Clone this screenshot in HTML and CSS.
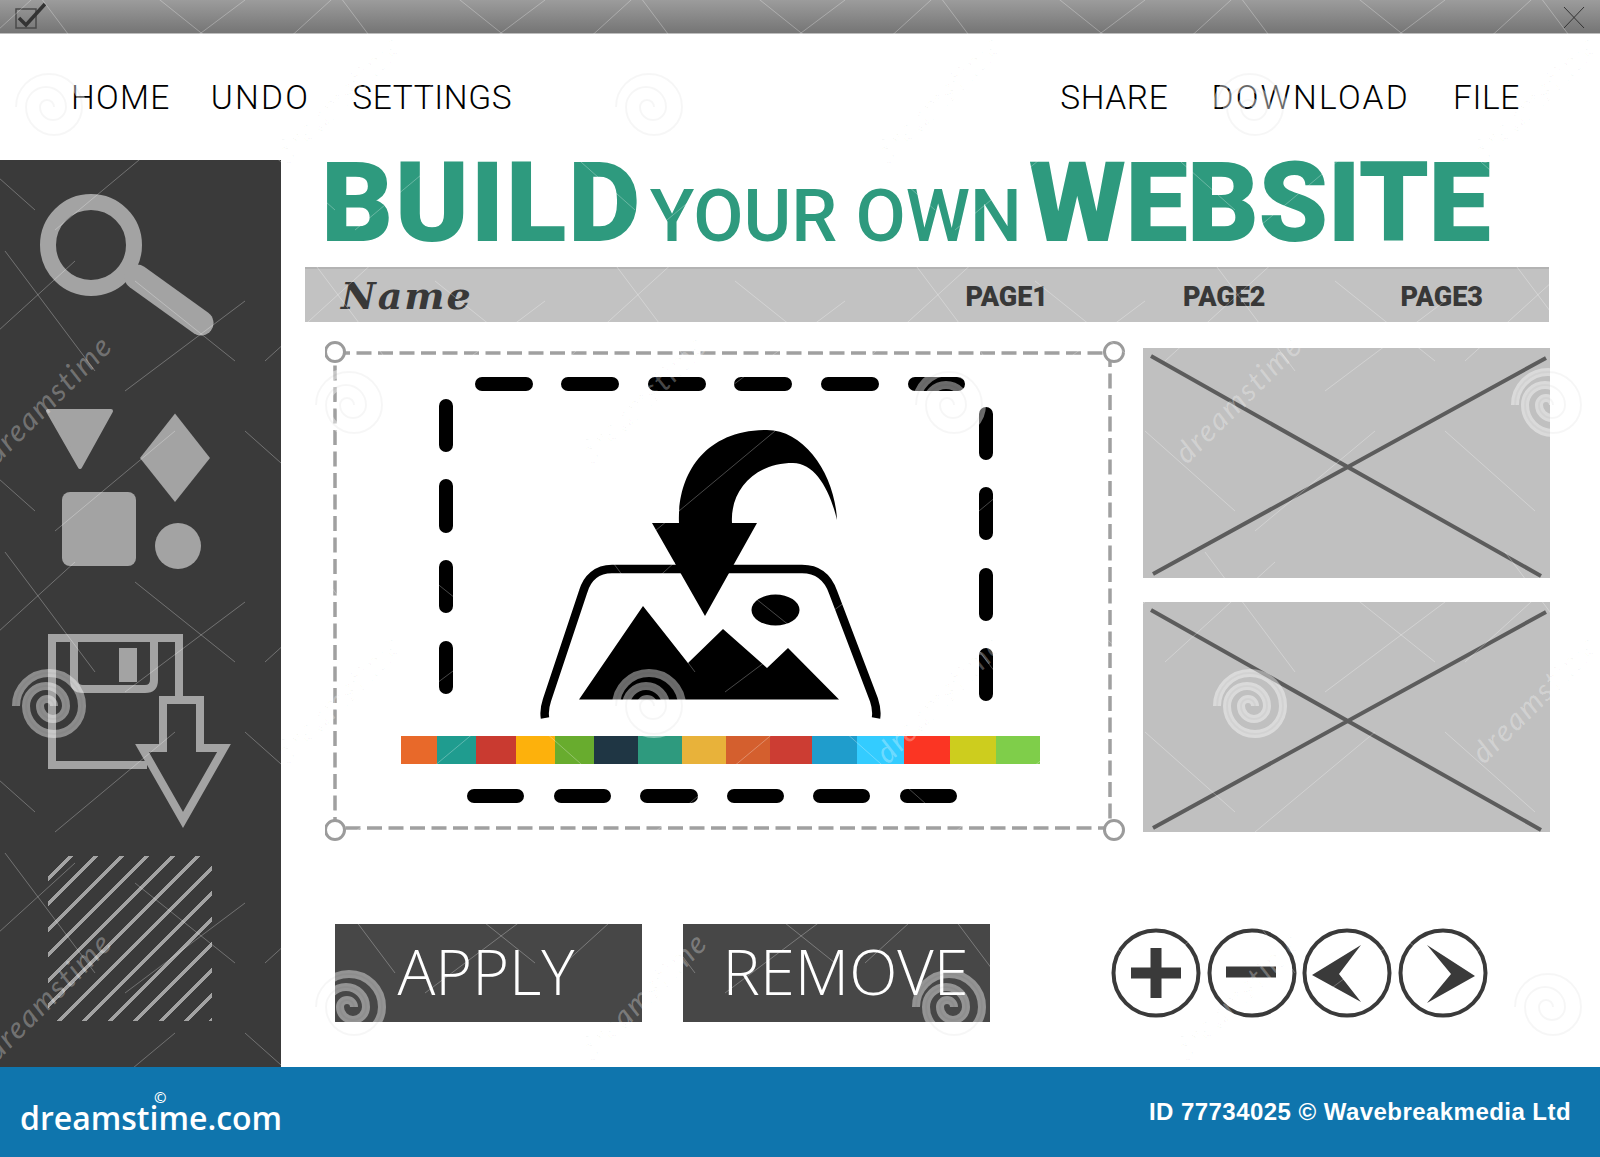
FILE: index.html
```html
<!DOCTYPE html>
<html lang="en">
<head>
    <meta charset="UTF-8">
    <title>Build your own website</title>
    <link rel="stylesheet" href="styles.css">
</head>
<body>
    <div id="page">
        <div class="titlebar">
            <svg width="50" height="33" viewBox="0 0 50 33"><rect x="16" y="9" width="20" height="19" fill="none" stroke="#4a4a4a" stroke-width="1.500"/><path d="M19 18L26 25L45 4" fill="none" stroke="#333" stroke-width="3.500"/></svg>
            <svg width="40" height="33" viewBox="0 0 40 33"><path d="M4 7L24 28M24 7L4 28" stroke="#333" stroke-width="1"/></svg>
        </div>

        <div class="nav">
            <div class="nav-left">
                <span>HOME</span>
                <span class="wide">UNDO</span>
                <span class="tight push">SETTINGS</span>
            </div>
            <div class="nav-right">
                <span class="tight">SHARE</span>
                <span class="wide">DOWNLOAD</span>
                <span class="tight">FILE</span>
            </div>
        </div>

        <div class="middle">
            <div class="sidebar">
                <svg class="ico ico-search" width="200" height="150" viewBox="30 190 200 150">
                    <circle cx="91" cy="245" r="43" fill="none" stroke="#a3a3a3" stroke-width="16"/>
                    <path d="M137 277L201 323" stroke="#a3a3a3" stroke-width="25" stroke-linecap="round"/>
                </svg>
                <svg class="ico ico-shapes" width="200" height="165" viewBox="30 405 200 165">
                    <path d="M48 411H111L80 467Z" fill="#a3a3a3" stroke="#a3a3a3" stroke-width="4" stroke-linejoin="round"/>
                    <path d="M175 413.500L210 458L175 502L140 458Z" fill="#a3a3a3"/>
                    <rect x="62" y="492" width="74" height="74" rx="8" fill="#a3a3a3"/>
                    <circle cx="178" cy="546" r="23" fill="#a3a3a3"/>
                </svg>
                <svg class="ico ico-save" width="210" height="202" viewBox="30 630 210 202">
                    <path d="M179 696V638H52V765H147" fill="none" stroke="#a3a3a3" stroke-width="8"/>
                    <path d="M74 638V680q0 9 9 9H145q9 0 9-9V638" fill="none" stroke="#a3a3a3" stroke-width="8"/>
                    <rect x="119" y="648" width="18" height="34" fill="#a3a3a3"/>
                    <path d="M163 700H200V748H224L183 820L142 748H163Z" fill="#3a3a3a" stroke="#a3a3a3" stroke-width="8"/>
                </svg>
                <div class="hatch"></div>
            </div>

            <div class="main">
                <h1 class="headline">
                    <span class="big build">BUILD</span>
                    <span class="small">YOUR OWN</span>
                    <span class="big site">WEBSITE</span>
                </h1>
                <div class="namebar">
                    <span class="name">Name</span>
                    <div class="pages">
                        <span>PAGE1</span>
                        <span>PAGE2</span>
                        <span>PAGE3</span>
                    </div>
                </div>

                <div class="content">
                    <svg class="stage" width="800" height="502" viewBox="325 340 800 502">
                        <rect x="335" y="353" width="775" height="475" fill="none" stroke="#a0a0a0" stroke-width="3.500" stroke-dasharray="15 6.500"/>
                        <g fill="#fff" stroke="#9b9b9b" stroke-width="3">
                            <circle cx="335" cy="352" r="9.500"/>
                            <circle cx="1114" cy="352" r="9.500"/>
                            <circle cx="335" cy="830" r="9.500"/>
                            <circle cx="1114" cy="830" r="9.500"/>
                        </g>
                        <g stroke="#000" stroke-width="14" stroke-linecap="round">
                            <path d="M482 384H526M568 384H612M655 384H699M741 384H785M828 384H872M915 384H958"/>
                            <path d="M446 406V445M446 486V526M446 567V606M446 648V687"/>
                            <path d="M986 414V453M986 494V533M986 575V614M986 655V694"/>
                            <path d="M474 796H517M561 796H604M647 796H691M734 796H777M820 796H863M907 796H950"/>
                        </g>
                        <path d="M545 718C544 712 545 706 547 700L583 592C587 578 597 569 612 569H802C818 569 828 578 833 592L874 700C876 706 877 712 876 718" fill="none" stroke="#000" stroke-width="8.500"/>
                        <path d="M579 699.500L643 606L688 663L723 629L767 668L788 648L839 699.500Z" fill="#000"/>
                        <ellipse cx="775.500" cy="610" rx="24" ry="15.500" fill="#000"/>
                        <path d="M679 523C677 480 700 430 767 430C805 430 835 475 837 520C830 490 815 463 793 463C755 463 730 490 732 523H757L705 616L652 523Z" fill="#000"/>
                        <g>
                            <rect x="401" y="736" width="37" height="28" fill="#e8692a"/>
                            <rect x="437" y="736" width="40" height="28" fill="#1f9c8f"/>
                            <rect x="476" y="736" width="41" height="28" fill="#c93a30"/>
                            <rect x="516" y="736" width="40" height="28" fill="#fdb10c"/>
                            <rect x="555" y="736" width="40" height="28" fill="#68ac2e"/>
                            <rect x="594" y="736" width="45" height="28" fill="#1f3644"/>
                            <rect x="638" y="736" width="45" height="28" fill="#2e9a7e"/>
                            <rect x="682" y="736" width="45" height="28" fill="#e8b23a"/>
                            <rect x="726" y="736" width="45" height="28" fill="#d45f2e"/>
                            <rect x="770" y="736" width="43" height="28" fill="#cc3d33"/>
                            <rect x="812" y="736" width="46" height="28" fill="#1f9dcc"/>
                            <rect x="857" y="736" width="47" height="28" fill="#33ccff"/>
                            <rect x="904" y="736" width="46" height="28" fill="#fb3523"/>
                            <rect x="950" y="736" width="47" height="28" fill="#cdcd1e"/>
                            <rect x="996" y="736" width="44" height="28" fill="#7fce4a"/>
                        </g>
                    </svg>
                    <div class="thumbs">
                        <svg class="thumb" width="407" height="230" viewBox="0 0 407 230"><path d="M8 8L398 228M403 10L10 226" stroke="#5c5c5c" stroke-width="4"/></svg>
                        <svg class="thumb" width="407" height="230" viewBox="0 0 407 230"><path d="M8 8L398 228M403 10L10 226" stroke="#5c5c5c" stroke-width="4"/></svg>
                    </div>
                </div>

                <div class="actions">
                    <div class="btn btn-apply">APPLY</div>
                    <div class="btn btn-remove">REMOVE</div>
                    <div class="rounds">
                        <svg width="92" height="92" viewBox="0 0 92 92"><circle cx="46" cy="46" r="42.500" fill="#fff" stroke="#3a3a3a" stroke-width="4"/><path d="M21 46H71M46 21V71" stroke="#3a3a3a" stroke-width="11"/></svg>
                        <svg width="92" height="92" viewBox="0 0 92 92"><circle cx="46" cy="46" r="42.500" fill="#fff" stroke="#3a3a3a" stroke-width="4"/><path d="M20 45H70" stroke="#3a3a3a" stroke-width="11"/></svg>
                        <svg width="92" height="92" viewBox="0 0 92 92"><circle cx="46" cy="46" r="42.500" fill="#fff" stroke="#3a3a3a" stroke-width="4"/><path d="M11 48L60 18L38 47L60 75Z" fill="#3a3a3a"/></svg>
                        <svg width="92" height="92" viewBox="0 0 92 92"><circle cx="46" cy="46" r="42.500" fill="#fff" stroke="#3a3a3a" stroke-width="4"/><path d="M78 49L30 18L54 47L30 76Z" fill="#3a3a3a"/></svg>
                    </div>
                </div>
            </div>
        </div>

        <div class="footer">
            <span class="brand">dreamstime.com<i class="brand-c">©</i></span>
            <span class="credit">ID 77734025 © Wavebreakmedia Ltd</span>
        </div>

        <!-- faint mark laid over the picture -->
        <svg class="mark" width="1600" height="1067" viewBox="0 0 1600 1067">
            <defs>
                <pattern id="cross" width="300" height="301" patternUnits="userSpaceOnUse" x="-55" y="-60">
                    <path d="M20 120L130 20M60 10L150 130M190 40L290 120M110 290L230 190M0 190L90 270M180 150L300 60" stroke="#fff" stroke-opacity=".28" fill="none"/>
                </pattern>
                <path id="spiral" d="M5 2A7 7 0 0 0-9 2A13 13 0 0 0 17 2A20 20 0 0 0-23 2A28 28 0 0 0 33 2A33 33 0 0 0-33 2" fill="none"/>
                <g id="ringset">
                    <use href="#spiral" x="49" y="105"/><use href="#spiral" x="649" y="105"/><use href="#spiral" x="1250" y="105"/>
                    <use href="#spiral" x="349" y="403"/><use href="#spiral" x="949" y="403"/><use href="#spiral" x="1548" y="403"/>
                    <use href="#spiral" x="49" y="704"/><use href="#spiral" x="649" y="704"/><use href="#spiral" x="1250" y="704"/>
                    <use href="#spiral" x="349" y="1005"/><use href="#spiral" x="949" y="1005"/><use href="#spiral" x="1548" y="1005"/>
                </g>
            </defs>
            <rect width="1600" height="1067" fill="url(#cross)"/>
            <use class="rings-light" href="#ringset"/>
            <use class="rings-line" href="#ringset"/>
            <g class="wm">
                <text transform="translate(-3 465) rotate(-45)">dreamstime</text>
                <text transform="translate(592 465) rotate(-45)">dreamstime</text>
                <text transform="translate(1187 465) rotate(-45)">dreamstime</text>
                <text transform="translate(-3 1062) rotate(-45)">dreamstime</text>
                <text transform="translate(592 1062) rotate(-45)">dreamstime</text>
                <text transform="translate(1187 1062) rotate(-45)">dreamstime</text>
                <text transform="translate(288 765) rotate(-45)">dreamstime</text>
                <text transform="translate(888 765) rotate(-45)">dreamstime</text>
                <text transform="translate(1484 765) rotate(-45)">dreamstime</text>
                <text transform="translate(288 165) rotate(-45)">dreamstime</text>
                <text transform="translate(888 165) rotate(-45)">dreamstime</text>
                <text transform="translate(1484 165) rotate(-45)">dreamstime</text>
            </g>
        </svg>
    </div>
</body>
</html>
```

FILE: styles.css
```css
*{margin: 0; padding: 0; box-sizing: border-box;}
body{
    background: #fff;
    font-family: "Liberation Sans", sans-serif;
}
#page{
    width: 1600px;
    height: 1157px;
    position: relative;
    overflow: hidden;
    display: flex;
    flex-direction: column;
}
.titlebar{
    height: 34px;
    flex: none;
    display: flex;
    justify-content: space-between;
    background: linear-gradient(#9c9c9c, #757575);
    border-bottom: 1px solid #bdbdbd;
}
.titlebar svg{
    display: block;
}
.nav{
    height: 126px;
    flex: none;
    display: flex;
    justify-content: space-between;
    align-items: center;
    padding: 0 80px 0 71px;
    font-family: Roboto, sans-serif;
    font-weight: 300;
    font-size: 33.500px;
    letter-spacing: 1.300px;
    color: #000;
}
.nav-left, .nav-right{
    display: flex;
}
.nav-left{
    gap: 40px;
}
.nav-right{
    gap: 43px;
}
.nav .wide{
    letter-spacing: 2.300px;
}
.nav .tight{
    letter-spacing: .6px;
}
.nav .push{
    margin-left: 2px;
}
.middle{
    flex: 1;
    display: flex;
    min-height: 0;
}
.sidebar{
    width: 281px;
    flex: none;
    background: #3a3a3a;
    padding: 30px 0 0 30px;
}
.ico{
    display: block;
}
.ico-shapes{
    margin-top: 65px;
}
.ico-save{
    margin-top: 60px;
}
.hatch{
    width: 164px;
    height: 165px;
    margin: 24px 0 0 18px;
    background: repeating-linear-gradient(135deg, transparent 0, transparent 14.500px, #a3a3a3 14.500px, #a3a3a3 18px);
}
.main{
    flex: 1;
    padding-left: 24px;
}
.headline{
    height: 107px;
    display: flex;
    align-items: baseline;
    padding-left: 16px;
    color: #2e9a7e;
    font-family: Roboto, sans-serif;
    line-height: 85px;
}
.headline .big{
    font-weight: 900;
    font-size: 112px;
}
.headline .build{
    letter-spacing: 1.400px;
}
.headline .site{
    letter-spacing: -1px;
}
.headline .small{
    font-weight: 500;
    font-size: 73px;
    margin: 0 7px 0 8px;
}
.namebar{
    width: 1244px;
    height: 55px;
    display: flex;
    align-items: center;
    justify-content: space-between;
    background: #c2c2c2;
    border-top: 2px solid #b3b3b3;
    padding: 0 66px 0 36px;
    color: #383838;
}
.name{
    font-family: "DejaVu Serif", serif;
    font-weight: 700;
    font-style: italic;
    font-size: 38px;
    letter-spacing: 2px;
}
.pages{
    display: flex;
    gap: 135px;
    margin-top: 2px;
    font-family: Roboto, sans-serif;
    font-weight: 900;
    font-size: 27px;
}
.content{
    display: flex;
    margin-top: 18px;
    padding-left: 20px;
}
.stage{
    display: block;
    flex: none;
}
.thumbs{
    margin: 8px 0 0 18px;
    display: flex;
    flex-direction: column;
    gap: 24px;
}
.thumb{
    display: block;
    background: #c0c0c0;
}
.actions{
    display: flex;
    align-items: center;
    margin-top: 82px;
    padding-left: 30px;
}
.btn{
    width: 307px;
    height: 98px;
    margin-right: 41px;
    background: #474747;
    color: #fff;
    font-family: "Open Sans", sans-serif;
    font-weight: 300;
    font-size: 63px;
    line-height: 94px;
    text-align: center;
}
.btn-apply{
    padding-right: 5px;
}
.btn-remove{
    padding-left: 18px;
}
.rounds{
    display: flex;
    gap: 3.500px;
    margin-left: 79px;
}
.rounds svg{
    display: block;
}
.footer{
    height: 90px;
    flex: none;
    display: flex;
    justify-content: space-between;
    align-items: center;
    padding: 0 29px 0 20px;
    background: #0f75ad;
    color: #fff;
}
.brand{
    position: relative;
    font-family: "Open Sans", sans-serif;
    font-weight: 600;
    font-size: 32px;
    line-height: 26px;
    margin-top: 12px;
}
.brand-c{
    position: absolute;
    left: 134px;
    top: -15px;
    font-size: 15px;
    line-height: 15px;
    font-style: normal;
}
.credit{
    font-weight: 700;
    font-size: 24px;
    letter-spacing: .45px;
}
.mark{
    position: absolute;
    left: 0;
    top: 0;
    pointer-events: none;
}
.rings-light{
    stroke: rgba(255, 255, 255, .42);
    stroke-width: 8px;
}
.rings-line{
    stroke: rgba(0, 0, 0, .035);
    stroke-width: 2px;
}
.wm text{
    font-family: Lato, sans-serif;
    font-style: italic;
    font-size: 30px;
    letter-spacing: 2px;
    fill: rgba(255, 255, 255, .3);
    stroke: rgba(0, 0, 0, .03);
}
```
